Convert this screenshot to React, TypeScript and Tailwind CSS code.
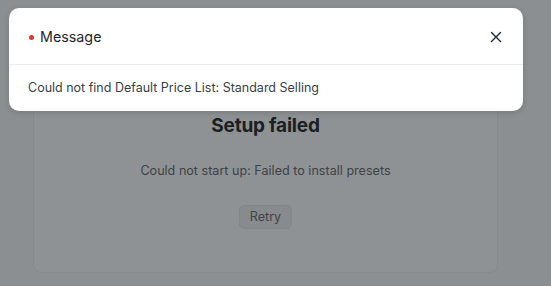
import React from "react";

export default function App() {
  return (
    <div
      className="relative w-[551px] h-[286px] overflow-hidden bg-[#8b8f91]"
      style={{ fontFamily: "Inter, 'Noto Sans', sans-serif" }}
    >
      <div className="ml-[33px] mt-[8px] w-[465px] h-[265px] rounded-[8px] border border-[#868a8c] bg-[#8e9294] flex flex-col items-center pt-[103px]">
        <div className="text-[19px] font-bold text-[#1b1f22] leading-[28px] tracking-[-0.2px]">Setup failed</div>
        <div className="mt-[22px] text-[12.6px] text-[#3e4347] leading-[18px]">Could not start up: Failed to install presets</div>
        <div className="mt-[25px] h-[24px] px-[10px] rounded-[5px] border border-[#83878a] bg-[#878b8e] text-[12.6px] text-[#3e4347] flex items-center">Retry</div>
      </div>
      <div className="absolute left-[9px] top-[8px] w-[514px] h-[103px] bg-white rounded-[10px] shadow-[0_2px_6px_rgba(0,0,0,0.15)] flex flex-col">
        <div className="h-[57px] flex items-center justify-between pl-[19px] pr-[20px] pt-[2px] border-b border-[#ededed]">
          <div className="flex items-center">
            <span className="ml-[1px] w-[5px] h-[5px] rounded-full bg-[#e03636]" />
            <span className="ml-[6px] text-[14.3px] text-[#1f272e] leading-[20px]">Message</span>
          </div>
          <svg width="14" height="14" viewBox="0 0 14 14" fill="none" stroke="#1f272e" strokeWidth="1.4" strokeLinecap="round">
            <path d="M2.5 2.5L11.5 11.5M11.5 2.5L2.5 11.5" />
          </svg>
        </div>
        <div className="flex-1 flex items-center pl-[19px] pt-[1px] text-[12.5px] text-[#383f45]">
          Could not find Default Price List: Standard Selling
        </div>
      </div>
    </div>
  );
}
